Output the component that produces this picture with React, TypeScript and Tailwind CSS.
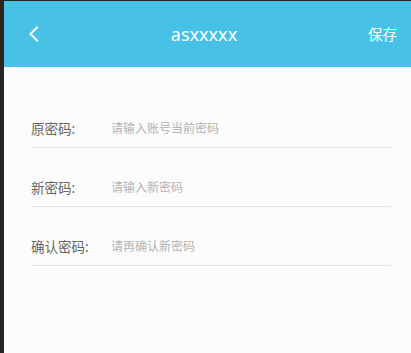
import React from "react";

const rows = [
  { label: "原密码:", ph: "请输入账号当前密码" },
  { label: "新密码:", ph: "请输入新密码" },
  { label: "确认密码:", ph: "请再确认新密码" },
];

export default function App() {
  return (
    <div
      className="flex h-[353px] w-[411px] flex-col bg-[#27261f] pl-[4px] pt-[1px]"
      style={{ fontFamily: '"Noto Sans", "Noto Sans CJK SC", sans-serif' }}
    >
      <div className="flex h-[66px] items-center bg-[#47c2e6] text-white">
        <div className="flex w-[60px] items-center pl-[24px]">
          <svg width="12" height="16" viewBox="0 0 12 16" fill="none">
            <polyline
              points="9,1.5 2.5,8 9,14.5"
              stroke="white"
              strokeWidth="2"
              strokeLinecap="square"
              strokeLinejoin="miter"
            />
          </svg>
        </div>
        <div className="flex-1 pr-[7px] text-center text-[18px] leading-none">asxxxxx</div>
        <div className="flex w-[60px] justify-end pr-[14px] text-[14.5px] leading-none">保存</div>
      </div>
      <div className="flex-1 bg-[#fcfcfc] pl-[27px] pr-[20px] pt-[22px]">
        {rows.map((r) => (
          <div key={r.label} className="flex h-[59px] flex-col justify-end border-b border-[#e3e3e3]">
            <div className="flex h-[36px] items-center">
              <div className="w-[80px] text-[13.5px] text-[#666666]">{r.label}</div>
              <div className="text-[12px] text-[#b3b3b3]">{r.ph}</div>
            </div>
          </div>
        ))}
      </div>
    </div>
  );
}
